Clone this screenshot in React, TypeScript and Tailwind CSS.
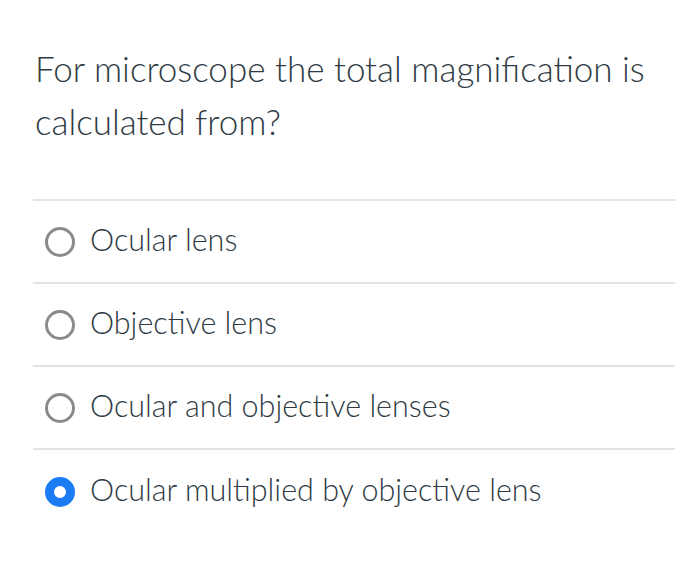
import React, { useState } from 'react';

const options = [
  'Ocular lens',
  'Objective lens',
  'Ocular and objective lenses',
  'Ocular multiplied by objective lens',
];

const Radio: React.FC<{ checked: boolean }> = ({ checked }) => (
  <span
    className={`shrink-0 w-[30px] h-[30px] rounded-full bg-white ${
      checked ? 'border-[9px] border-[#1c7cf3]' : 'border-[3px] border-[#8a8a8a]'
    }`}
  />
);

const App: React.FC = () => {
  const [selected, setSelected] = useState(3);

  return (
    <div className="w-[700px] h-[569px] bg-white text-[#2f3a43] font-['Lato',sans-serif] font-light">
      {/* Question */}
      <div className="pl-[35px] pt-[42px] pr-6 text-[35px] leading-[53px]">
        For microscope the total magnification is calculated from?
      </div>

      {/* Answers */}
      <div className="mt-[51px] ml-[33px] mr-[25px] border-t-2 border-[#e3e3e3]">
        {options.map((label, i) => (
          <div
            key={label}
            onClick={() => setSelected(i)}
            className={`flex items-center h-[83px] pl-[12px] cursor-pointer ${
              i < options.length - 1 ? 'border-b-2 border-[#e3e3e3]' : ''
            }`}
          >
            <Radio checked={selected === i} />
            <span className="ml-[15px] pb-[4px] text-[30.5px]">{label}</span>
          </div>
        ))}
      </div>
    </div>
  );
};

export default App;
